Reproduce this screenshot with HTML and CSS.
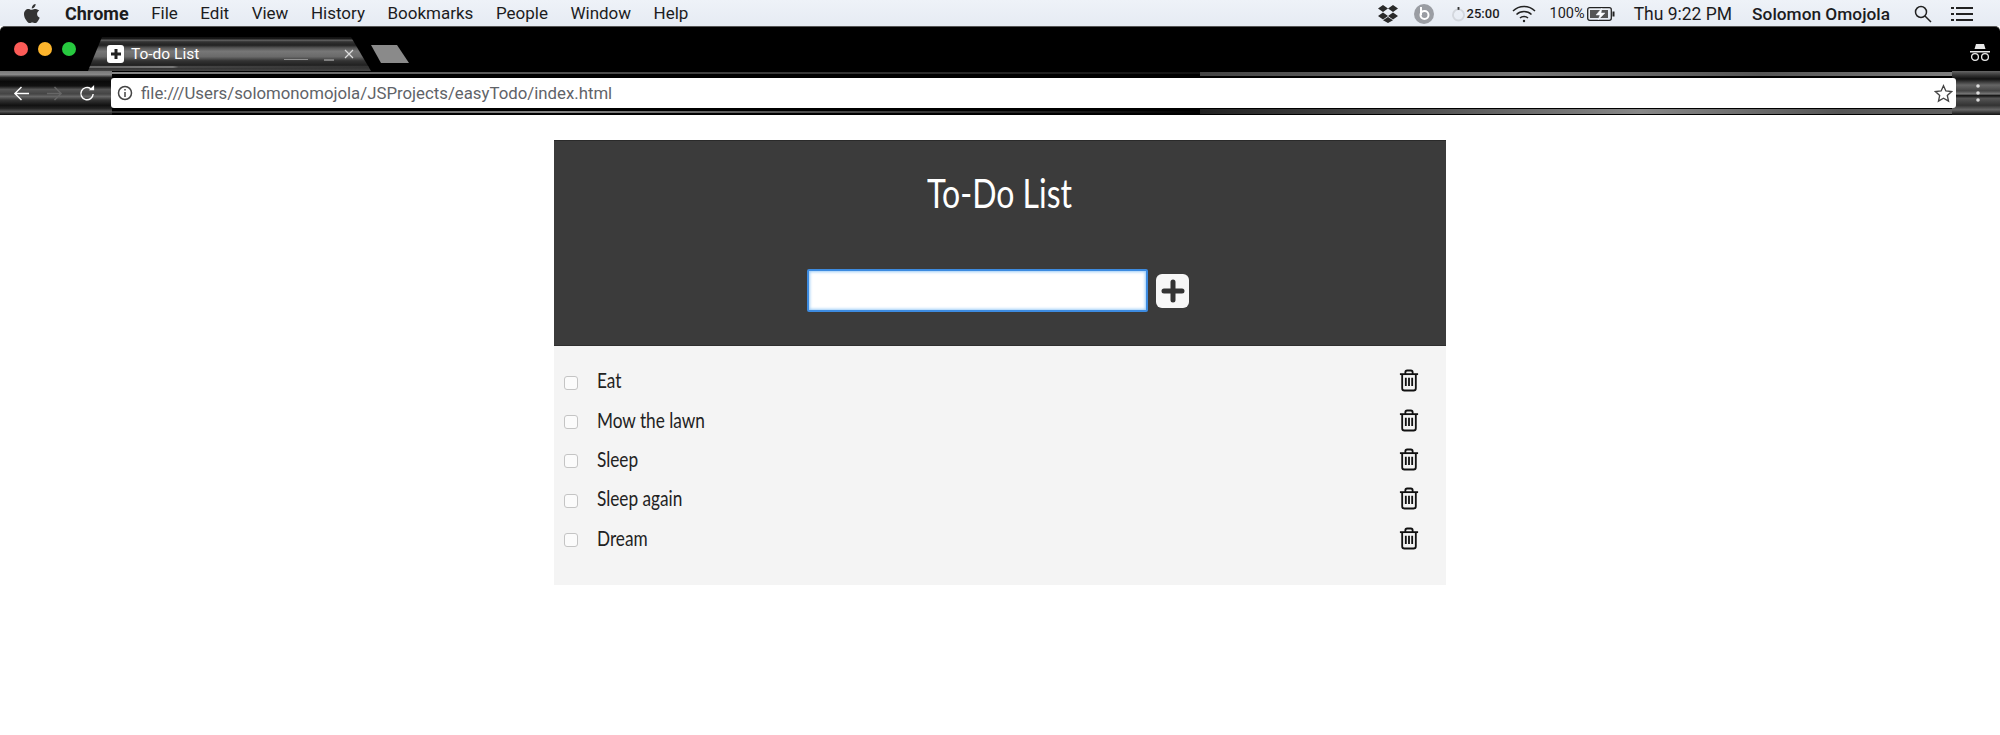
FILE: index.html
```html
<!DOCTYPE html>
<html lang="en">
<head>
<meta charset="utf-8">
<title>To-do List</title>
<link rel="stylesheet" href="styles.css">
</head>
<body>
<header class="menubar">
  <svg class="apple" viewBox="0 0 16 19" width="16" height="19"><path d="M11.600 0c.1 1.200-.3 2.300-1 3.100-.7.800-1.700 1.400-2.800 1.300-.1-1.100.4-2.300 1-3 .7-.8 1.900-1.400 2.800-1.400zM15.200 6.500c-1.400.9-2.100 2-2.100 3.500 0 1.700 1 3 2.600 3.700-.4 1.100-.9 2.100-1.600 3.100-.9 1.300-1.700 2.300-2.900 2.300-1.100 0-1.500-.7-2.900-.7s-1.800.7-2.900.7c-1.200 0-2.100-1.100-3-2.500C.9 14.600 0 12.400 0 10.300 0 7 2.100 5 4.400 5c1.200 0 2.200.8 3 .8.700 0 1.900-.9 3.300-.9 1.800 0 3.500.7 4.500 1.600z"/></svg>
  <nav class="menu">
    <span class="menu-app">Chrome</span>
    <span>File</span><span>Edit</span><span>View</span><span>History</span><span>Bookmarks</span><span>People</span><span>Window</span><span>Help</span>
  </nav>
  <div class="status">
    <svg class="st-drop" viewBox="0 0 20 18" width="20" height="18"><path d="M5 0l5 3.500-5 3.500-5-3.500zM15 0l5 3.500-5 3.500-5-3.500zM5 7.500l5 3.500-5 3.500-5-3.500zM15 7.500l5 3.500-5 3.500-5-3.500zM5 15.200l5-3.200 5 3.200-5 2.800z"/></svg>
    <svg class="st-beats" viewBox="0 0 20 20" width="20" height="20"><circle cx="10" cy="10" r="10" fill="#9a9da3"/><circle cx="10.500" cy="11" r="4" fill="none" stroke="#fff" stroke-width="2"/><rect x="6" y="3" width="2" height="8" fill="#fff"/></svg>
    <span class="st-timer"><svg viewBox="0 0 14 16" width="13" height="16"><circle cx="7" cy="9" r="6" fill="none" stroke="#d3d7dd" stroke-width="2"/><rect x="6" y="0.500" width="2" height="3" fill="#333"/></svg><b>25:00</b></span>
    <svg class="st-wifi" viewBox="0 0 24 18" width="24" height="18" fill="none" stroke="#222" stroke-width="1.500"><path d="M1 6c6-6 16-6 22 0M4.500 9.500c4-4 11-4 15 0M8 13c2-2 6-2 8 0"/><circle cx="12" cy="16" r="1.200" fill="#222" stroke="none"/></svg>
    <span class="st-batt">100%<svg viewBox="0 0 28 14" width="28" height="14"><rect x="0.700" y="0.700" width="23.600" height="12.600" rx="2" fill="none" stroke="#222" stroke-width="1.300"/><rect x="25.500" y="4.500" width="2" height="5" fill="#222"/><path d="M3 3h18v8H3z" fill="#555"/><path d="M15 1l-6 7h4l-2 5 7-7h-4z" fill="#fff" stroke="#e9eef6" stroke-width="0.500"/></svg></span>
    <span class="st-time">Thu 9:22 PM</span>
    <span class="st-user">Solomon Omojola</span>
    <svg class="st-search" viewBox="0 0 18 18" width="18" height="18" fill="none" stroke="#222" stroke-width="1.500"><circle cx="7" cy="7" r="5.500"/><path d="M11 11l6 6"/></svg>
    <svg class="st-list" viewBox="0 0 22 14" width="22" height="14"><path d="M0 0h3v2H0zM5 0h17v2H5zM0 6h3v2H0zM5 6h17v2H5zM0 12h3v2H0zM5 12h17v2H5z" fill="#222"/></svg>
  </div>
</header>

<div class="browser">
  <div class="tabstrip">
    <div class="lights"><i class="red"></i><i class="yellow"></i><i class="green"></i></div>
    <div class="tab">
      <span class="favicon"><svg viewBox="0 0 16 16" width="16" height="16"><path d="M6.500 3h3v3.500H13v3H9.500V13h-3V9.500H3v-3h3.500z" fill="#222"/></svg></span>
      <span class="tab-title">To-do List</span>
      <svg class="tab-close" viewBox="0 0 10 10" width="10" height="10" fill="none" stroke="#ddd" stroke-width="1.200"><path d="M1 1l8 8M9 1l-8 8"/></svg>
    </div>
    <div class="newtab"></div>
    <svg class="incognito" viewBox="0 0 20 24" width="20" height="24" fill="#e8e8e8"><path d="M6 0h8l1.500 5h-11zM0 7h20v1.600H0z"/><g fill="none" stroke="#e8e8e8" stroke-width="1.300"><circle cx="5" cy="13" r="3.400"/><circle cx="15" cy="13" r="3.400"/></g></svg>
  </div>
  <div class="toolbar">
    <svg class="nav-icon" viewBox="0 0 18 18" width="17" height="17" fill="none" stroke="#fff" stroke-width="1.500"><path d="M17 9H2M9 2L2 9l7 7"/></svg>
    <svg class="nav-icon" viewBox="0 0 18 18" width="17" height="17" fill="none" stroke="#666" stroke-width="1.500"><path d="M1 9h15M9 2l7 7-7 7"/></svg>
    <svg class="nav-icon" viewBox="0 0 18 18" width="17" height="17" fill="none" stroke="#fff" stroke-width="1.500"><path d="M15 9.500A6.500 6.500 0 1 1 12.500 4"/><path d="M10.500 5.500h5.500V0z" fill="#fff" stroke="none"/></svg>
    <div class="urlbar">
      <svg viewBox="0 0 16 16" width="16" height="16" fill="none" stroke="#444" stroke-width="1.500"><circle cx="8" cy="8" r="6.500"/><path d="M8 7v5M8 4v1.600"/></svg>
      <span class="url">file:///Users/solomonomojola/JSProjects/easyTodo/index.html</span>
      <svg class="star" viewBox="0 0 20 20" width="19" height="19" fill="none" stroke="#444" stroke-width="1.400"><path d="M10 1.800l2.500 5.500 6 .7-4.500 4 1.300 6L10 15l-5.300 3 1.300-6-4.500-4 6-.7z"/></svg>
    </div>
    <svg class="kebab" viewBox="0 0 4 18" width="4" height="18" fill="#ddd"><circle cx="2" cy="2" r="1.800"/><circle cx="2" cy="9" r="1.800"/><circle cx="2" cy="16" r="1.800"/></svg>
  </div>
</div>

<main class="card">
  <section class="card-head">
    <h1>To-Do List</h1>
    <form class="add-form">
      <input class="add-input" type="text" aria-label="New task">
      <span class="add-btn"><svg viewBox="0 0 24 24" width="24" height="24"><path d="M12 3v18M3 12h18" stroke="#333" stroke-width="5" stroke-linecap="round"/></svg></span>
    </form>
  </section>
  <ul class="tasks">
    <li class="task"><span class="box"></span><span class="task-name">Eat</span><svg class="trash" viewBox="0 0 22 24" width="20" height="23"><use href="#trash"/></svg></li>
    <li class="task"><span class="box"></span><span class="task-name">Mow the lawn</span><svg class="trash" viewBox="0 0 22 24" width="20" height="23"><use href="#trash"/></svg></li>
    <li class="task"><span class="box"></span><span class="task-name">Sleep</span><svg class="trash" viewBox="0 0 22 24" width="20" height="23"><use href="#trash"/></svg></li>
    <li class="task"><span class="box"></span><span class="task-name">Sleep again</span><svg class="trash" viewBox="0 0 22 24" width="20" height="23"><use href="#trash"/></svg></li>
    <li class="task"><span class="box"></span><span class="task-name">Dream</span><svg class="trash" viewBox="0 0 22 24" width="20" height="23"><use href="#trash"/></svg></li>
  </ul>
</main>

<svg class="defs" width="0" height="0"><defs><g id="trash" fill="none" stroke="#111" stroke-width="2"><path d="M1 5h20"/><path d="M7 5V3a2 2 0 0 1 2-2h4a2 2 0 0 1 2 2v2"/><path d="M3.500 5v15.500A2.500 2.500 0 0 0 6 23h10a2.500 2.500 0 0 0 2.500-2.500V5"/><path d="M7.500 9v9M11 9v9M14.500 9v9"/></g></defs></svg>
</body>
</html>
```

FILE: styles.css
```css
* { box-sizing: border-box; }
html, body { margin: 0; padding: 0; }
body { background: #fff; font-family: "Liberation Sans", Arial, sans-serif; height: 735px; overflow: hidden; }

.menubar { height: 26px; background: linear-gradient(#eef2f8, #e6ebf3); display: flex; align-items: center; padding: 1px 27px 0 24px; color: #1c1c1e; font-family: Roboto, "Liberation Sans", sans-serif; font-size: 17px; }
.apple { fill: #333; margin-right: 25px; flex: none; }
.menu { display: flex; gap: 22.500px; }
.menu-app { font-weight: 700; font-size: 18px; }
.status { margin-left: auto; display: flex; align-items: center; }
.st-drop { fill: #2a2a2a; }
.st-beats { margin-left: 16px; }
.st-timer { display: flex; align-items: center; margin-left: 18px; gap: 2px; font-size: 13px; }
.st-timer b { font-weight: 500; }
.st-wifi { margin-left: 12px; }
.st-batt { display: flex; align-items: center; margin-left: 14px; gap: 2px; font-size: 14.500px; }
.st-time { margin-left: 19px; font-size: 17.500px; }
.st-user { margin-left: 20px; font-weight: 500; font-size: 17.300px; }
.st-search { margin-left: 24px; }
.st-list { margin-left: 19px; }

.browser { height: 89px; background: #000; display: flex; flex-direction: column; border-top: 1px solid #555; border-radius: 5px 5px 0 0; }
.tabstrip { height: 44px; display: flex; align-items: flex-end; position: relative; }
.lights { display: flex; gap: 10px; margin: 0 0 15px 14px; align-self: flex-end; }
.lights i { width: 14px; height: 14px; border-radius: 50%; display: block; }
.red { background: #fc5b57; }
.yellow { background: #fdb52c; }
.green { background: #27c93f; }
.tab { margin-left: 12px; width: 283px; height: 34px; display: flex; align-items: center; padding: 0 17px 0 19px; clip-path: polygon(0 100%, 14px 0, 263px 0, 283px 100%); background:
  linear-gradient(#8f8f8f, #8f8f8f) 196px 22px / 24px 1px no-repeat,
  linear-gradient(#808080, #808080) 236px 22px / 10px 2px no-repeat,
  linear-gradient(90deg, #666, #777 30%, #444 32%, #333) 0 29px / 100% 2px no-repeat,
  linear-gradient(#111 0, #1a1a1a 6%, #666 9%, #333 14%, #222 24%, #555 32%, #777 42%, #6a6a6a 58%, #333 70%, #222 82%, #444 100%); color: #fff; font-size: 14px; }
.favicon { width: 17px; height: 18px; background: #fff; border-radius: 3px; display: flex; align-items: center; justify-content: center; flex: none; }
.tab-title { margin-left: 7px; font-family: Roboto, sans-serif; font-size: 15.500px; flex: 1; }
.newtab { width: 38px; height: 18px; margin: 0 0 8px 0; background: #8a8a8a; clip-path: polygon(0 0, 26px 0, 38px 100%, 10px 100%); }
.incognito { position: absolute; right: 10px; top: 17px; }

.toolbar { flex: 1; display: flex; align-items: center; padding: 0 20px 0 13px; background:
  linear-gradient(#666 0, #333 10%, #111 18%, #666 32%, #444 45%, #777 52%, #111 56%, #555 62%, #333 78%, #666 88%, #111 100%) right top / 48px 100% no-repeat,
  linear-gradient(#777 0, #888 8%, #222 15%, #0a0a0a 24%, #111 34%, #555 42%, #444 52%, #666 58%, #333 66%, #111 78%, #222 85%, #555 92%, #0a0a0a 100%) left top / 112px 100% no-repeat,
  linear-gradient(90deg, #444, #777 40%, #555 70%, #888) right 0 top 1px / 800px 4px no-repeat,
  linear-gradient(90deg, #888, #444 50%, #111) 112px 1px / 1100px 2px no-repeat,
  linear-gradient(90deg, #222, #555 30%, #888 55%, #555 80%, #666) right 0 top 38px / 800px 5px no-repeat,
  linear-gradient(90deg, #333, #888 40%, #555 60%, #000) 112px 40px / 1100px 2px no-repeat,
  #000; }
.nav-icon { flex: none; margin-right: 16px; }
.nav-icon:nth-child(3) { margin-right: 15px; }
.urlbar { flex: 1; height: 30px; background: #fff; border-radius: 3px; display: flex; align-items: center; padding: 0 3px 0 6px; gap: 8px; }
.url { font-family: Roboto, sans-serif; font-size: 16.800px; color: #5f6368; flex: 1; }
.kebab { flex: none; margin-left: 20px; margin-right: 0; }

.card { width: 892px; margin: 25px 0 0 554px; }
.card-head { height: 206px; background: #3b3b3b; border-top: 1px solid #2a2a2a; border-bottom: 1px solid #2e2e2e; display: flex; flex-direction: column; align-items: center; padding-top: 28px; }
.card-head h1 { margin: 0; font-family: Lato, sans-serif; font-weight: 400; font-size: 40px; line-height: 48px; color: #fff; transform: scaleX(.8); }
.add-form { display: flex; align-items: center; gap: 8px; margin-top: 52px; margin-left: -4px; }
.add-input { width: 341px; height: 43px; border: 2px solid #3d8be0; box-shadow: 0 0 3px 1px #9cccf7 inset; background: #fff; border-radius: 2px; outline: none; }
.add-btn { width: 33px; height: 34px; background: #f7f7f7; border-radius: 6px; display: flex; align-items: center; justify-content: center; }

.tasks { list-style: none; margin: 0; padding: 15px 0 29px; background: #f4f4f4; height: 239px; }
.task { height: 39.400px; display: flex; align-items: center; padding: 0 27px 0 10px; }
.box { width: 14px; height: 14px; border: 1px solid #c4c4c4; border-radius: 3px; background: #fbfbfb; margin-top: 4px; flex: none; }
.task-name { margin-left: 19px; margin-top: -2px; flex: 1; font-family: Lato, sans-serif; font-size: 21px; color: #222; transform: scaleX(.82); transform-origin: left center; }
.trash { flex: none; }
.defs { position: absolute; }
```
